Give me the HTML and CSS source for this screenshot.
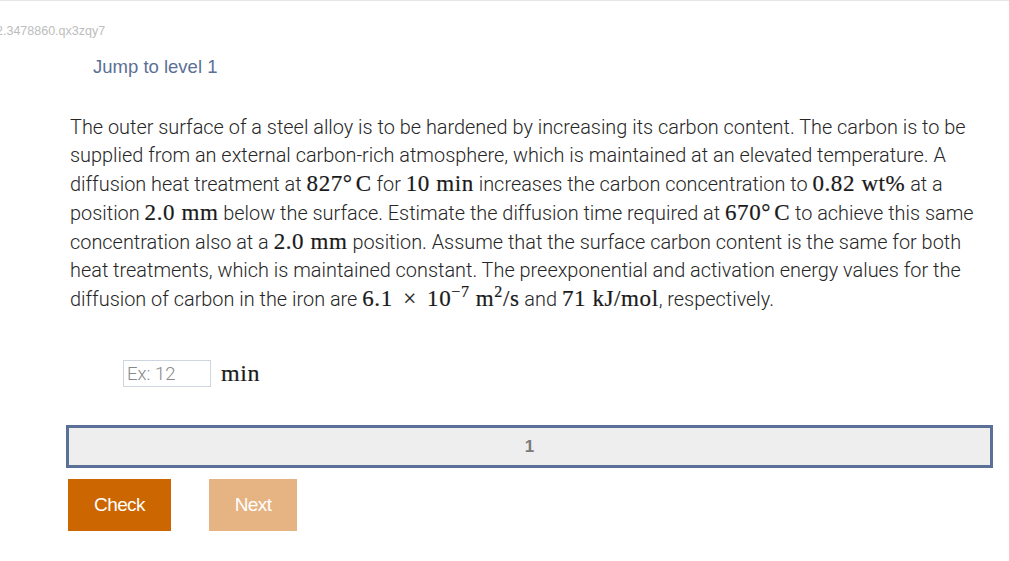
FILE: index.html
```html
<!DOCTYPE html>
<html>
<head>
<meta charset="utf-8">
<link rel="stylesheet" href="styles.css">
</head>
<body>
<div class="page">
  <div class="qid">2.3478860.qx3zqy7</div>
  <a class="jump" href="#">Jump to level 1</a>
  <p class="problem">The outer surface of a steel alloy is to be hardened by increasing its carbon content. The carbon is to be supplied from an external carbon-rich atmosphere, which is maintained at an elevated temperature. A diffusion heat treatment at <span class="m">827°<span class="sp"></span>C</span> for <span class="m">10 min</span> increases the carbon concentration to <span class="m">0.82 wt%</span> at a position <span class="m">2.0 mm</span> below the surface. Estimate the diffusion time required at <span class="m">670°<span class="sp"></span>C</span> to achieve this same concentration also at a <span class="m">2.0 mm</span> position. Assume that the surface carbon content is the same for both heat treatments, which is maintained constant. The preexponential and activation energy values for the diffusion of carbon in the iron are <span class="m">6.1 <span class="op">×</span> 10<sup>−7</sup> m<sup>2</sup>/s</span> and <span class="m">71 kJ/mol</span>, respectively.</p>
  <div class="answer">
    <input class="field" type="text" placeholder="Ex: 12">
    <span class="m unit">min</span>
  </div>
  <div class="levels"><span class="lvl">1</span></div>
  <div class="actions">
    <button class="btn check">Check</button>
    <button class="btn next">Next</button>
  </div>
</div>
</body>
</html>
```

FILE: styles.css
```css
html, body {
  margin: 0;
  padding: 0;
  background: #fff;
}
body {
  font-family: Roboto, "Liberation Sans", sans-serif;
  border-top: 1px solid #e6e6e6;
}
.page {
  display: flex;
  flex-direction: column;
  align-items: flex-start;
}
.qid {
  margin-top: 22px;
  margin-left: -4px;
  font-family: "Liberation Sans", Arial, sans-serif;
  font-size: 12.5px;
  line-height: 16px;
  color: #bdbdbd;
}
.jump {
  margin-top: 17px;
  margin-left: 93px;
  font-family: "Liberation Sans", Arial, sans-serif;
  font-size: 18.5px;
  line-height: 22px;
  color: #5b7096;
  text-decoration: none;
}
.problem {
  margin: 36px 0 0 70px;
  width: 925px;
  font-size: 19.9px;
  font-weight: 300;
  line-height: 28px;
  color: #262626;
}
.m {
  font-family: "Liberation Serif", "DejaVu Serif", serif;
  font-size: 23px;
  font-weight: normal;
  color: #1a1a1a;
  letter-spacing: 0.6px;
  white-space: nowrap;
  -webkit-text-stroke: 0.2px #1a1a1a;
}
.m .sp {
  display: inline-block;
  width: 3px;
}
.m .op {
  margin: 0 4px;
}
.m sup {
  font-size: 16px;
  line-height: 0;
  vertical-align: 9px;
}
.answer {
  margin: 46px 0 0 123px;
  display: flex;
  align-items: center;
  gap: 10px;
}
.field {
  box-sizing: border-box;
  width: 88px;
  height: 27px;
  margin: 0;
  padding: 0 3px;
  border: 1px solid #cdd6de;
  border-radius: 0;
  font-family: Roboto, sans-serif;
  font-size: 18.5px;
  font-weight: 300;
  color: #333;
}
.field::placeholder {
  color: #888;
}
.unit {
  font-size: 24px;
}
.levels {
  box-sizing: border-box;
  margin: 38px 0 0 66px;
  width: 927px;
  height: 43px;
  border: 3px solid #5b7096;
  background: #eeeeee;
  display: flex;
  align-items: center;
  justify-content: center;
}
.lvl {
  font-family: "Liberation Sans", Arial, sans-serif;
  font-size: 17px;
  font-weight: bold;
  color: #7a7a7a;
}
.actions {
  margin: 11px 0 0 68px;
  display: flex;
  gap: 38px;
}
.btn {
  height: 52px;
  border: 0;
  margin: 0;
  font-family: "Liberation Sans", Arial, sans-serif;
  font-size: 19px;
  color: #fff;
  letter-spacing: -0.6px;
}
.check {
  width: 103px;
  background: #cc6600;
}
.next {
  width: 88px;
  background: #e6b383;
}
```
